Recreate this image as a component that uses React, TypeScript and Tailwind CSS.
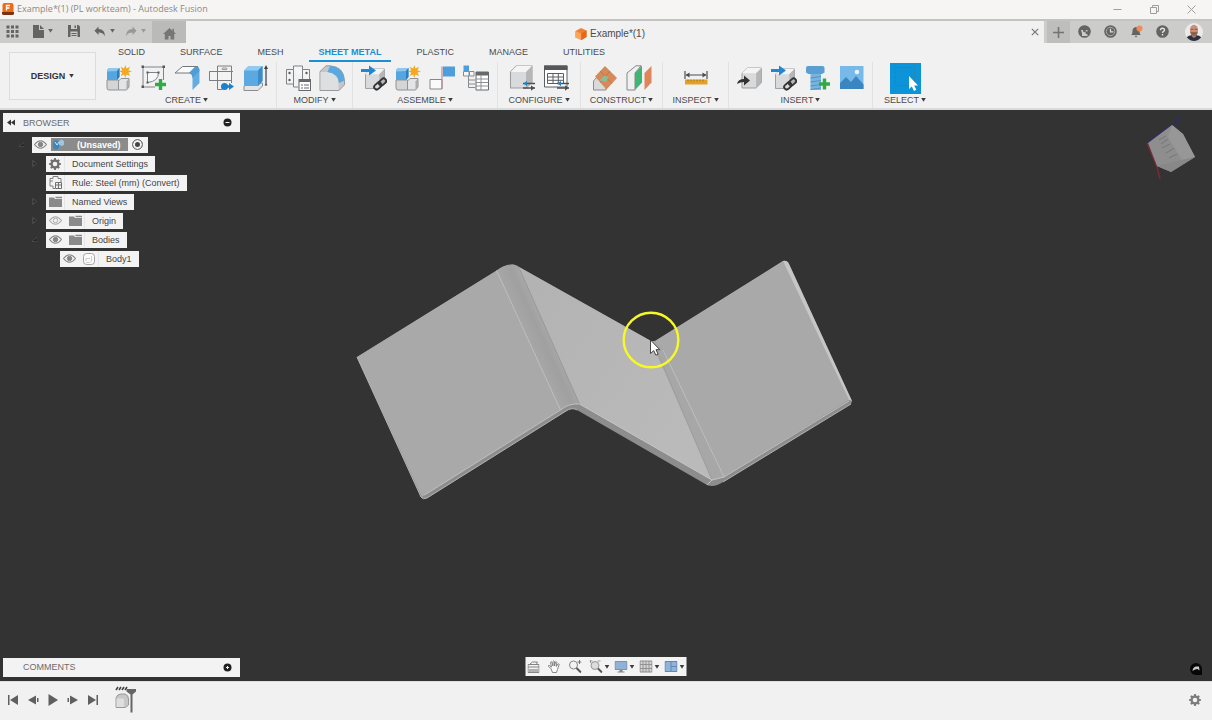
import type { ReactNode } from "react";

const Art = ({ children, className = "size-[26px]", box = "0 0 26 26" }: { children: ReactNode; className?: string; box?: string }) => (
  <svg viewBox={box} className={`shrink-0 ${className}`} fill="none" aria-hidden="true">
    {children}
  </svg>
);

const Tri = ({ className = "text-[#3c3c3c]" }: { className?: string }) => (
  <Art className={`h-1 w-[5px] ${className}`} box="0 0 5 4">
    <path d="M.2 0h4.600L2.500 3.800z" fill="currentColor" />
  </Art>
);

/* ---------- ribbon drawings ---------- */

const Cube = ({ x, y, s }: { x: number; y: number; s: number }) => (
  <g transform={`translate(${x} ${y}) scale(${s / 20})`} strokeLinejoin="round">
    <path d="M0 5.500 5.500 0H20v15l-5.500 5.500H0z" fill="#d9dadb" stroke="#9b9d9f" strokeWidth="1" />
    <path d="M0 5.500 5.500 0H20l-5.500 5.500z" fill="#f4f4f4" />
    <path d="M14.500 5.500 20 0v15l-5.500 5.500z" fill="#b4b6b8" />
  </g>
);

const Plus = ({ x, y }: { x: number; y: number }) => (
  <path d={`M${x - 5.5} ${y}h11M${x} ${y - 5.5}v11`} stroke="#2faa45" strokeWidth="3.400" />
);

const Chain = () => (
  <g stroke="#333" strokeWidth="1.900" fill="none">
    <rect x="17.500" y="14.500" width="8" height="5" rx="2.500" transform="rotate(-42 21.500 17)" />
    <rect x="12.800" y="18.500" width="8" height="5" rx="2.500" transform="rotate(-42 16.800 21)" />
  </g>
);

const Sliders = () => (
  <g stroke="#4b4f52" strokeWidth="1.300">
    <path d="M14 18.500h12M14 23h12" />
    <path d="m18 15.800-3.500 2.700 3.500 2.700z" fill="#1e86cf" stroke="none" />
    <path d="m22 20.300 3.500 2.700-3.500 2.700z" fill="#4b4f52" stroke="none" />
  </g>
);

const NewComponent = () => (
  <Art>
    <path d="M1 15h11.500v10H3q-2 0-2-2z" fill="#d3d5d7" stroke="#919396" />
    <path d="M12.500 16 15 13.500h8V22l-2.500 3h-8z" fill="#e3e4e5" stroke="#919396" strokeLinejoin="round" />
    <path d="M20.500 16.500 23 13.500V22l-2.500 3z" fill="#aaacae" />
    <path d="M1 6.500Q1 3 4.500 3h9v9L11 15H1z" fill="#57a5de" />
    <path d="M1 6.500Q1 3 4.500 3h9L11 6z" fill="#8cc8f0" />
    <path d="M11 6l2.500-3v9L11 15z" fill="#2f7dba" />
    <path d="m19.300 0 1.200 3.600 3.600-1.800-1.700 3.500 3.600 1.100-3.600 1.200 1.700 3.500-3.600-1.700-1.200 3.500-1.200-3.500-3.500 1.700 1.700-3.500-3.500-1.200 3.500-1.100-1.700-3.500 3.500 1.800z" fill="#f4a81d" />
  </Art>
);

const CreateSketch = () => (
  <Art>
    <path d="M3 2h20.500v13M3 2v20h12" stroke="#808386" strokeWidth="1" />
    <path d="M7.500 17.500V7.500h11q0 9-11 10z" stroke="#808386" fill="#f7f7f7" />
    <g fill="#55585b">
      <path d="M1.500.5h2.500v2.500H1.500zM22.500 .5h2.500v2.500h-2.500zM1.500 20.500h2.500v2.500H1.500zM6.500 6.500h2v2h-2zM17.500 6.500h2v2h-2zM6.500 16.500h2v2h-2z" />
    </g>
    <Plus x={20.5} y={19.5} />
  </Art>
);

const Flange = () => (
  <Art>
    <path d="M1 8 8.500 1.500H24L17 8z" fill="#fafafa" stroke="#75787b" />
    <path d="M15 8 21 2q4.500-1 4.500 4v12L18.500 25V13q0-4-3.500-5z" fill="#62ade3" />
    <path d="M18.500 13q0-4-3.500-5l6-6q4.500-1 4.500 4z" fill="#4d9dd7" />
  </Art>
);

const Unfold = () => (
  <Art>
    <path d="M5.500 6.500h4V1h14v5.500H25M5.500 6.500v9H1.500v-9zM9.500 1v23.500h5M23.500 1v17" stroke="#7c7f82" />
    <path d="M1.500 6.500H23.500v9H1.500z" fill="#f3f3f3" stroke="#7c7f82" />
    <path d="M9.500 6.500v9" stroke="#7c7f82" />
    <rect x="14" y="3" width="5" height="1.600" rx=".8" stroke="#7c7f82" strokeWidth=".8" />
    <circle cx="16.500" cy="21.500" r="3.500" fill="#1f80ca" />
    <path d="M16 20.300h5V18l5 3.500-5 3.500v-2.300h-5z" fill="#1f80ca" />
  </Art>
);

const Extrude = () => (
  <Art>
    <path d="m2 21 4-3h14.500v3L16 25.500H2z" fill="#e3e4e5" stroke="#8b8d90" />
    <path d="M2 5.500 6.500 1h14v15L16 21H2z" fill="#5ca9e1" />
    <path d="M2 5.500 6.500 1h14L16 5.500z" fill="#93cbf0" />
    <path d="M16 5.500 20.500 1v15L16 21z" fill="#3b8cca" />
    <path d="M24 3v17M22.800 20h2.400" stroke="#3b3e41" strokeWidth="1.200" />
    <path d="m24 0 2 4h-4z" fill="#3b3e41" />
  </Art>
);

const Rules = () => (
  <Art>
    <path d="M1.500 4.500h7V1h9v3.500h7V14M1.500 4.500V19h7v3h5M8.500 4.500V19M17.500 4.500V14" stroke="#808386" fill="#f5f5f5" />
    <g fill="#5b5e61">
      <circle cx="4.500" cy="8" r="1.200" />
      <circle cx="4.500" cy="15" r="1.200" />
      <circle cx="21.500" cy="8" r="1.200" />
    </g>
    <rect x="14" y="14.500" width="11.500" height="11" fill="#fff" stroke="#66696c" />
    <path d="M14 14.500h11.500V17H14z" fill="#66696c" />
    <path d="M16 20h2m1 0h5m-8 3h2m1 0h5" stroke="#66696c" />
  </Art>
);

const Fillet = () => (
  <Art>
    <path d="M1 6.500 7 .8h4q14 1 14.500 15v4L20 25.500H1z" fill="#c4c6c8" stroke="#97999c" />
    <path d="M1.500 7h7q10.500 1 11 11v7h-18z" fill="#dedfe0" />
    <path d="M11 1q13.500 1 14.500 14.500L20 18Q19 8.500 8.500 7z" fill="#5ba8e0" />
  </Art>
);

const InsertLink = () => (
  <Art>
    <Cube x={4.5} y={4} s={19} />
    <path d="M0 4h8V.5L15 5.500 8 10.500V7H0z" fill="#2386d2" />
    <Chain />
  </Art>
);

const Joint = () => (
  <Art>
    <path d="M1 14.500h12V24H1z" stroke="#85888b" fill="#fafafa" />
    <path d="M13 1.500V24" stroke="#b58e94" strokeWidth="1.200" />
    <path d="M14 1.500h12v10H14z" fill="#4d9fdb" />
  </Art>
);

const Parts = () => (
  <Art>
    <path d="M.5.500h5.500v5.500H.500z" fill="#4d9fdb" />
    <path d="M.5 6.500H6V11H.5zM6.500 6.500H11V11H6.500z" fill="#f7f7f7" stroke="#888b8e" />
    <path d="M5.500 11v11.500M5.500 15H12m-6.500 4H12m-6.500 3.500H12" stroke="#888b8e" />
    <path d="M13 7h12.500v18H13z" fill="#fff" stroke="#66696c" />
    <path d="M13 7h12.500v3.500H13z" fill="#66696c" />
    <path d="M18 10v15M13 14h12.500M13 17.500h12.500M13 21h12.500" stroke="#8d9093" />
  </Art>
);

const ConfigBody = () => (
  <Art>
    <Cube x={1.5} y={1} s={21.5} />
    <Sliders />
  </Art>
);

const ConfigTable = () => (
  <Art>
    <path d="M1.500 1h22.500v21H1.500z" fill="#fff" stroke="#5b5e61" />
    <path d="M1 .5h23.500v4.500H1z" fill="#55585b" />
    <path d="M4.500 8.500h16v10h-16zM4.500 12h16m-16 3.300h16M10 8.500v10m5.300-10v10" stroke="#5b5e61" />
    <Sliders />
  </Art>
);

const PlaneAngle = () => (
  <Art>
    <path d="M1.500 16 5 12l9 9v4H1.500z" fill="#d9dadb" stroke="#8a8d90" />
    <path d="m13 1 12 12-10.500 11.500L3 11.500z" fill="#d58a5a" />
    <path d="m8 6 12 12.500M18 6 8.500 17.500" stroke="#b86e42" strokeWidth=".8" />
    <path d="m7.500 15.500 5-5 4 1.500-2.500 5z" fill="#8ebc96" />
  </Art>
);

const OffsetPlane = () => (
  <Art>
    <path d="M1 8 10 .8h5L9 8v17H1z" fill="#f0f0f0" stroke="#85888b" />
    <path d="m9 8 7-7.500v17L9 25z" fill="#3fb574" />
    <path d="m18.500 8 7-7v16.500l-7 7.500z" fill="#e0855a" />
  </Art>
);

const Measure = () => (
  <Art>
    <path d="M2 6v8M24 6v8M3 10h20" stroke="#4c4f52" strokeWidth="1.200" />
    <path d="m2.500 10 4-2.500v5zM23.500 10l-4-2.500v5z" fill="#4c4f52" />
    <path d="M2 14.500h22.500V19.500H2z" fill="#e2a227" />
    <path d="M5 14.500v2m3-2v2m3-2v2m3-2v2m3-2v2m3-2v2" stroke="#9a6b12" strokeWidth=".8" />
  </Art>
);

const InsertBody = () => (
  <Art>
    <Cube x={5} y={3} s={19.5} />
    <path d="M0 19q1-5 7-5v-3.500l6 5-6 5V17q-4 0-7 2z" fill="#333" />
  </Art>
);

const Bolt = () => (
  <Art>
    <path d="M1 3Q1 1 3 1h14.500q2 0 2 2v4.500L17 9H3.500L1 7.500z" fill="#5a9fd4" />
    <path d="M5.500 9H16v16H5.500z" fill="#79b4e0" />
    <path d="M5.500 13 16 11.500M5.500 17 16 15.500M5.500 21 16 19.500M5.500 24.500 16 23" stroke="#5494c6" />
    <Plus x={19.5} y={19} />
  </Art>
);

const Picture = () => (
  <Art>
    <path d="M1 1h23.500v23H1z" fill="#77b9e8" />
    <path d="m1 18 6-6 5 5 5-6 7.500 8.500V24H1z" fill="#3a86c0" />
    <circle cx="18" cy="7" r="2.300" fill="#e9f4fb" />
  </Art>
);

const SelectArt = () => (
  <Art className="size-[31px]" box="0 0 31 31">
    <path d="M0 0h31v31H0z" fill="#0c93d8" />
    <path d="M5.500 4.500h19v18h-19z" stroke="#3a7f96" strokeDasharray="3 1.500" />
    <path d="M19 13v13l2.800-2.500 2.200 4.500 2.300-1.200L24.200 22.500h3.800z" fill="#fff" />
  </Art>
);

/* ---------- ribbon ---------- */

type Group = { name: string; width: string; tools: [string, () => ReactNode][] };

const GROUPS: Group[] = [
  { name: "CREATE", width: "w-[180px]", tools: [["New component", NewComponent], ["Create sketch", CreateSketch], ["Flange", Flange], ["Unfold", Unfold], ["Extrude", Extrude]] },
  { name: "MODIFY", width: "w-[76px]", tools: [["Rules", Rules], ["Fillet", Fillet]] },
  { name: "ASSEMBLE", width: "w-[145px]", tools: [["Insert component", InsertLink], ["New component", NewComponent], ["Joint", Joint], ["Parts list", Parts]] },
  { name: "CONFIGURE", width: "w-[83px]", tools: [["Configure", ConfigBody], ["Configuration table", ConfigTable]] },
  { name: "CONSTRUCT", width: "w-[82px]", tools: [["Plane at angle", PlaneAngle], ["Offset plane", OffsetPlane]] },
  { name: "INSPECT", width: "w-[66px]", tools: [["Measure", Measure]] },
  { name: "INSERT", width: "w-[144px]", tools: [["Insert mesh", InsertBody], ["Insert derive", InsertLink], ["Insert fastener", Bolt], ["Insert image", Picture]] },
  { name: "SELECT", width: "w-[64px]", tools: [["Select", SelectArt]] },
];

const TABS = ["SOLID", "SURFACE", "MESH", "SHEET METAL", "PLASTIC", "MANAGE", "UTILITIES"];

const Ribbon = () => (
  <section className="flex h-[67px] shrink-0 border-b-2 border-[#d9dadb] bg-[#f1f1f2] text-[#4b4b4b]">
    <button className="mt-[9px] ml-[9px] flex h-12 w-[87px] items-center justify-center gap-1 border border-[#dcdcdd] bg-[#f3f3f4] font-bold text-[#333]">
      DESIGN <Tri />
    </button>
    <div className="flex flex-col">
      <nav className="ml-3 flex h-[19px] gap-[15px]">
        {TABS.map((t) => (
          <button
            key={t}
            className={t === "SHEET METAL" ? "border-b-2 border-[#1b8fd3] px-[10px] font-bold text-[#1b8fd3]" : "border-b-2 border-transparent px-[10px]"}
          >
            {t}
          </button>
        ))}
      </nav>
      <div className="ml-px flex h-[46px]">
        {GROUPS.map((g) => (
          <div key={g.name} className={`flex flex-col items-center border-r border-[#e2e2e3] last:border-r-0 ${g.width}`}>
            <div className="flex h-8 items-center gap-2">
              {g.tools.map(([label, Icon]) => (
                <button key={label} aria-label={label} className="shrink-0">
                  <Icon />
                </button>
              ))}
            </div>
            <button className="flex h-3 items-center gap-[2px] leading-3">
              {g.name} <Tri />
            </button>
          </div>
        ))}
      </div>
    </div>
  </section>
);

/* ---------- top bars ---------- */

const TitleBar = () => (
  <header className="flex h-[19px] shrink-0 items-center bg-[#f7f5f3] pb-px pl-[2px] text-[#8b8986]">
    <Art className="size-3" box="0 0 12 12">
      <rect x=".5" width="11" height="12" rx="2" fill="#ee6a17" />
      <path d="M0 9h12v1.500Q12 12 10 12H2q-2 0-2-1.500z" fill="#7b3210" />
      <path d="M4.500 7.500v-5H8M4.500 5h3" stroke="#fff" strokeWidth="1.300" />
    </Art>
    <h1 className="ml-[3px] flex-1 font-['Open_Sans',sans-serif] text-[9px] leading-4">Example*(1) (PL workteam) - Autodesk Fusion</h1>
    <div className="flex gap-7 pr-4 text-[#a09e9b]">
      <button aria-label="Minimize">
        <Art className="size-[9px]" box="0 0 9 9"><path d="M.5 4.500h8" stroke="currentColor" /></Art>
      </button>
      <button aria-label="Restore">
        <Art className="size-[9px]" box="0 0 9 9"><path d="M.5 2.500h6v6h-6zM2.500 2.500v-2h6v6h-2" stroke="currentColor" /></Art>
      </button>
      <button aria-label="Close window">
        <Art className="size-[9px]" box="0 0 9 9"><path d="m.5.500 8 8m0-8-8 8" stroke="currentColor" /></Art>
      </button>
    </div>
  </header>
);

const TabBar = () => (
  <div className="flex h-6 shrink-0 border-t-2 border-[#c3c4c2] bg-[#cccdcb] text-[#636463]">
    <div className="flex w-[152px] items-center pb-[2px] pl-[6px]">
      <button aria-label="Data panel">
        <Art className="size-[13px]" box="0 0 13 13">
          <path d="M.5.5h3v3h-3zM5 .5h3v3H5zM9.500.5h3v3h-3zM.5 5h3v3h-3zM5 5h3v3H5zM9.500 5h3v3h-3zM.5 9.500h3v3h-3zM5 9.500h3v3H5zM9.500 9.500h3v3h-3z" fill="currentColor" />
        </Art>
      </button>
      <button aria-label="File" className="ml-[13px] flex items-center gap-1">
        <Art className="h-[13px] w-[12px]" box="0 0 12 13"><path d="M1 0h6v5h5v8H1z" fill="currentColor" /><path d="m8 0 4 4H8z" fill="currentColor" /></Art>
        <Tri className="text-[#636463]" />
      </button>
      <button aria-label="Save" className="ml-[15px]">
        <Art className="size-3" box="0 0 12 12">
          <path d="M0 0h10.500L12 1.500V12H0z" fill="currentColor" />
          <path d="M3 0h6v4H3zM2.500 6.500h7V12h-7z" fill="#cccdcb" />
          <path d="M6.500.5H8v2.500H6.500zM3.500 8h5v1h-5zM3.500 10h5v1h-5z" fill="currentColor" />
        </Art>
      </button>
      <button aria-label="Undo" className="ml-[14px] flex items-center gap-1">
        <Art className="h-[11px] w-[12px]" box="0 0 12 11"><path d="M4.500.500v2.500q6.500 0 6.500 7.500-1.500-4-6.500-4V9L.5 4.800z" fill="currentColor" /></Art>
        <Tri className="text-[#636463]" />
      </button>
      <button aria-label="Redo" className="ml-[10px] flex items-center gap-1 text-[#979897]">
        <Art className="h-[11px] w-[12px]" box="0 0 12 11"><path d="M7.500.500v2.500Q1 3 1 10.500q1.500-4 6.500-4V9l4-4.200z" fill="currentColor" /></Art>
        <Tri className="text-[#979897]" />
      </button>
    </div>
    <button aria-label="Home" className="flex w-[34px] items-center justify-center bg-[#babbb9] pt-[3px]">
      <Art className="size-[13px]" box="0 0 13 13">
        <path d="M6.500 1 0 7h1.800v5.500h3.700V9h2v3.500h3.700V7H13l-2-1.900V1.800H9.500v1.900z" fill="#757675" />
      </Art>
    </button>
    <div className="flex flex-1 items-center bg-[#f1f1f2] px-1 text-[10px] text-[#4b4b4b]">
      <div className="flex flex-1 items-center justify-center gap-[3px] pt-[3px]">
        <Art className="size-3" box="0 0 12 12">
          <path d="m6 0 5.500 2.500v6.500L6.500 12 .5 9.500V3z" fill="#f08030" />
          <path d="M.5 3 6 5.500V12L.5 9.500z" fill="#f9a55c" />
          <path d="m6 5.500 5.500-3v6.500L6.500 12z" fill="#e2691c" />
        </Art>
        Example*(1)
      </div>
      <button aria-label="Close tab" className="px-px">
        <Art className="size-2" box="0 0 8 8"><path d="m.8.800 6.400 6.400m0-6.400L.8 7.200" stroke="#777" strokeWidth="1.200" /></Art>
      </button>
    </div>
    <div className="flex w-[168px] items-center">
      <button aria-label="New tab" className="ml-[3px] flex h-full w-[23px] items-center justify-center bg-[#bebfbd]">
        <Art className="size-[11px]" box="0 0 11 11"><path d="M5.500 0v11M0 5.500h11" stroke="#737473" strokeWidth="1.600" /></Art>
      </button>
      <div className="ml-2 flex items-center gap-[13px] pb-[2px]">
        <button aria-label="Extensions">
          <Art className="size-[13px]" box="0 0 13 13">
            <circle cx="6.500" cy="6.500" r="6.300" fill="currentColor" />
            <path d="M3 5h2.200a1.500 1.500 0 1 0 2.600 0H9.500V6.500a1.400 1.400 0 1 0 0 2.500V11H4V8.500z" fill="#cccdcb" />
          </Art>
        </button>
        <button aria-label="Job status">
          <Art className="size-[13px]" box="0 0 13 13">
            <circle cx="6.500" cy="6.500" r="6.300" fill="currentColor" />
            <circle cx="6.500" cy="6.500" r="4.200" stroke="#a9aaa9" strokeWidth="1" />
            <path d="M6.500 3.800v3h2.800" stroke="#e2e3e1" strokeWidth="1.200" />
          </Art>
        </button>
        <button aria-label="Notifications">
          <Art className="size-[13px]" box="0 0 13 13">
            <path d="M1 10q1.500-1 1.500-4Q2.500 2.500 6 2q3.500.5 3.500 4 0 3 1.500 4zM4.500 10.800h3L6 12.500z" fill="currentColor" />
            <circle cx="9.500" cy="3.500" r="3" fill="#ee8b57" />
          </Art>
        </button>
        <button aria-label="Help">
          <Art className="size-[13px]" box="0 0 13 13">
            <circle cx="6.500" cy="6.500" r="6.300" fill="currentColor" />
            <path d="M4.500 5.200q0-2 2-2t2 1.800q0 1-1.200 1.600-.8.400-.8 1.400M6.500 9v1.500" stroke="#e2e3e1" strokeWidth="1.400" />
          </Art>
        </button>
      </div>
      <button aria-label="Account" className="ml-[16px] pb-px">
        <Art className="size-[18px]" box="0 0 18 18">
          <circle cx="9" cy="9" r="9" fill="#eceae8" />
          <path d="M1.800 14.300Q4 11.500 9 12.500q5-1 7.200 1.800A9 9 0 0 1 1.800 14.300z" fill="#2b3240" />
          <path d="M7 11h4v2.500L9 15l-2-1.500z" fill="#b87f69" />
          <ellipse cx="9" cy="7" rx="4" ry="5.300" fill="#c98f77" />
          <path d="M5.100 8.500Q9 10 12.900 8.500 12.500 13 9 13.200 5.500 13 5.100 8.500z" fill="#8d6757" />
          <path d="M5.500 6.300h2.800M9.700 6.300h2.800M7.500 10.300h3" stroke="#6b4b42" strokeWidth=".8" />
        </Art>
      </button>
    </div>
  </div>
);

/* ---------- browser tree ---------- */

const Eye = ({ off = false }: { off?: boolean }) => (
  <Art className="h-[9px] w-[13px]" box="0 0 13 9">
    <path d="M.5 4.500q6-7.500 12 0-6 7.500-12 0z" stroke={off ? "#aaaaaa" : "#858585"} strokeWidth="1.100" />
    <circle cx="6.500" cy="4.500" r="2.200" fill={off ? "none" : "#858585"} stroke={off ? "#aaaaaa" : "#858585"} />
  </Art>
);

const Folder = () => (
  <Art className="h-[11px] w-[13px]" box="0 0 13 11">
    <path d="M0 1.500h5l1 1.500h7v8H0z" fill="#8a8a8a" />
    <path d="M6 .8h7v1.500H7z" fill="#8a8a8a" />
  </Art>
);

const GEAR = "M5.600 0h1.800l.3 1.700 1.300.5L10.400 1.300l1.300 1.300-.9 1.400.5 1.300 1.700.3v1.800l-1.700.3-.5 1.300.9 1.400-1.300 1.300L9 10.900l-1.300.5L7.400 13H5.600l-.3-1.600L4 10.900l-1.400.8-1.300-1.300.9-1.400-.5-1.300L0 7.400V5.600l1.700-.3L2.200 4l-.9-1.400 1.300-1.300 1.400.9 1.300-.5zM6.500 4a2.500 2.500 0 1 0 0 5 2.500 2.500 0 0 0 0-5z";

const Gear = ({ color }: { color: string }) => (
  <Art className="size-3" box="0 0 13 13"><path d={GEAR} fill={color} fillRule="evenodd" /></Art>
);

const RuleIcon = () => (
  <Art className="size-[13px]" box="0 0 13 13">
    <path d="M1 2.500h3V.5h5v2h3V6M1 2.500V10h3v2.500h2M4 5H1" stroke="#808080" />
    <path d="M6.500 6.500h6v6h-6zM6.500 9h6m-3-2.500v6" stroke="#707070" />
  </Art>
);

const BodyIcon = () => (
  <Art className="size-3" box="0 0 12 12">
    <rect x=".5" y=".5" width="11" height="11" rx="3" fill="#fafafa" stroke="#a5a5a5" />
    <path d="M3 8V5.500h4M8.500 3v5L6.500 9.500H3" stroke="#cfcfcf" />
  </Art>
);

const Expander = ({ open = false, show = true }: { open?: boolean; show?: boolean }) =>
  show ? (
    <button aria-label={open ? "Collapse" : "Expand"} className="flex w-[5px] justify-center">
      <Art className="h-[7px] w-[5px]" box="0 0 5 7">
        {open ? <path d="M5 1.500v4H0z" fill="#1d1d1d" stroke="#5a5a5a" strokeWidth=".6" /> : <path d="M1 .5v6L4 3.500z" fill="#1d1d1d" stroke="#666" strokeWidth=".8" />}
      </Art>
    </button>
  ) : (
    <span className="w-[5px]" />
  );

type Row = { label: string; pad: string; icon: ReactNode; eye?: "on" | "off"; exp?: boolean; open?: boolean };

const ROWS: Row[] = [
  { label: "Document Settings", pad: "pl-[29px]", icon: <Gear color="#707070" />, exp: true },
  { label: "Rule: Steel (mm) (Convert)", pad: "pl-[29px]", icon: <RuleIcon /> },
  { label: "Named Views", pad: "pl-[29px]", icon: <Folder />, exp: true },
  { label: "Origin", pad: "pl-[29px]", icon: <Folder />, eye: "off", exp: true },
  { label: "Bodies", pad: "pl-[29px]", icon: <Folder />, eye: "on", exp: true, open: true },
  { label: "Body1", pad: "pl-[43px]", icon: <BodyIcon />, eye: "on" },
];

const BrowserPanel = () => (
  <aside className="relative w-[237px] text-[#444]">
    <header className="flex h-[19px] items-center bg-[#f3f3f4] pr-2 pl-1 text-[#6b6b6b]">
      <button aria-label="Collapse browser">
        <Art className="h-[7px] w-2" box="0 0 8 7"><path d="M4 .5v6L0 3.500zM8 .5v6L4 3.500z" fill="#333" /></Art>
      </button>
      <h2 className="ml-2 flex-1">BROWSER</h2>
      <button aria-label="Panel options">
        <Art className="size-[9px]" box="0 0 9 9"><circle cx="4.500" cy="4.500" r="4" fill="#222" /><path d="M2.500 4.500h4" stroke="#f3f3f4" /></Art>
      </button>
    </header>
    <ul className="mt-[3px]">
      <li className="flex h-[19px] items-center gap-2 pl-4">
        <Expander open />
        <div className="flex h-4 items-center bg-[#f3f3f4] pr-[5px] pl-[2px]">
          <button aria-label="Hide design"><Eye /></button>
          <div className="mx-1 flex h-[13px] items-center gap-[13px] bg-[#8b8b8b] pr-[7px] pl-[2px] font-bold text-white">
            <Art className="size-[11px]" box="0 0 11 11">
              <path d="m0 3 3-2.500 3 2.500v6L3 11 0 9z" fill="#3f86bd" />
              <path d="m6 2 2.500-1.500L11 2v4L8.500 7 6 5.500z" fill="#9cc6e4" />
              <path d="m2 3 2 3 2-3" stroke="#cfe6f6" />
            </Art>
            (Unsaved)
          </div>
          <input type="radio" name="active" defaultChecked aria-label="Active component" className="size-[11px] appearance-none rounded-full border border-[#777] bg-[#444] shadow-[inset_0_0_0_2px_#f3f3f4]" />
        </div>
      </li>
      {ROWS.map((r) => (
        <li key={r.label} className={`flex h-[19px] items-center gap-[9px] ${r.pad}`}>
          <Expander show={!!r.exp} open={r.open} />
          <div className="flex h-4 items-center bg-[#f3f3f4] pr-[7px]">
            {r.eye && (
              <button aria-label={`Toggle ${r.label}`} className="flex w-5 justify-center pr-[2px]">
                <Eye off={r.eye === "off"} />
              </button>
            )}
            <span className="flex w-[18px] justify-center">{r.icon}</span>
            <span className="flex h-full items-center border-l border-[#e6e6e6] pl-[7px] whitespace-nowrap">{r.label}</span>
          </div>
        </li>
      ))}
    </ul>
  </aside>
);

/* ---------- canvas ---------- */

const Model = () => (
  <svg viewBox="0 110 1212 571" preserveAspectRatio="xMidYMid meet" className="absolute inset-0 size-full" fill="none" role="img" aria-label="Bent sheet metal body">
    <defs>
      <linearGradient id="bend" x1="528" y1="345" x2="552" y2="334" gradientUnits="userSpaceOnUse">
        <stop stopColor="#a8a8a8" />
        <stop offset=".6" stopColor="#a0a0a0" />
        <stop offset="1" stopColor="#aaaaaa" />
      </linearGradient>
      <linearGradient id="mid" x1="520" y1="300" x2="700" y2="420" gradientUnits="userSpaceOnUse">
        <stop stopColor="#b3b3b3" />
        <stop offset="1" stopColor="#bababa" />
      </linearGradient>
    </defs>
    <path d="M357 357 498 270Q506 264 513 264.500 518 265 521 268L651 341H655L783 261Q787 260 789 264L852 401 851 404 723 482Q714 488 707 485L577 410Q572 407 566 411L427 498Q423 500 421 497z" fill="#8d8d8d" />
    <path d="M357 357 496.500 270.500 560.500 410 424.500 495 422 497z" fill="#a9a9a9" />
    <path d="M496.500 270.500Q506 264 513 264.500 518 265 520 270L579.500 404Q570 403 560.500 410z" fill="url(#bend)" />
    <path d="M519 267 651 341 655 347 712 480 579.500 404 520 270z" fill="url(#mid)" />
    <path d="M651 341H655L663 350 724 477 712 480z" fill="#a7a7a7" />
    <path d="M655 341 783 261 787 262 849 400 724 477 663 350z" fill="#aaa9aa" />
    <path d="M783 261Q787 260 789 264L852 401 849 400z" fill="#c6c6c6" />
    <path d="M496.500 270.500 560.500 410M579.500 404Q569 403 560.500 410L424.500 495M663 350 724 477 849 401" stroke="#bfbfbf" strokeWidth="1" />
    <path d="M520 270 579.500 404" stroke="#9a9a9a" strokeWidth="1" />
    <path d="M655 347 712 480" stroke="#9e9e9e" strokeWidth="1" />
    <path d="M579.500 404 712 480 724 477M712 480 707 485" stroke="#c6c6c6" strokeWidth="1" />
    <path d="M357 357 421 497Q423 500 427 498L566 411Q572 407 577 410" stroke="#b5b5b5" strokeWidth="1" />
    <path d="M723 482 851 404" stroke="#b0b0b0" strokeWidth="1" />
    <circle cx="651" cy="340" r="27.300" stroke="#f6f925" strokeWidth="2.400" />
    <path d="M650.500 340v13.500l3.200-2.900 2.200 4.600 2.200-1-2.100-4.500h3.800z" fill="#fff" stroke="#333" strokeWidth=".9" />
  </svg>
);

const ViewCube = () => (
  <svg viewBox="0 0 60 66" className="absolute top-[5px] right-2 h-[66px] w-[60px]" fill="none" role="img" aria-label="View cube">
    <path d="M3.500 27.500 35 5M32 9l4-8" stroke="#2d2b66" strokeWidth="1.500" />
    <path d="M3 28 13 52l3 12" stroke="#7b2a35" strokeWidth="1.500" />
    <path d="M4 28 28 10 39 19 51 42 27 57 13 51z" fill="#8e8e8e" />
    <path d="M28 10 39 19 51 42 38 45 24 22z" fill="#979797" />
    <path d="m13 51 25-6 13-3-24 15z" fill="#888888" />
    <path d="m15 25 7-4m-5 8 7-5m-6 9 8-4m-4 9 8-5m-5 10 8-4" stroke="#7c7c7c" strokeWidth="1.300" />
  </svg>
);

const NavBar = () => (
  <div className="absolute bottom-[5px] left-1/2 flex h-[19px] -translate-x-1/2 items-center gap-2 bg-[#f3f3f4] px-[2px] text-[#606060]">
    <button aria-label="Orbit">
      <Art className="h-3 w-[12px]" box="0 0 12 12"><path d="M2.500 3 5 1h5l-1 2M.5 3.500h11v8H.5zM.5 6h11M3 8.500h6" stroke="#858585" /><path d="M1 8h10v3H1z" fill="#b0b0b0" /></Art>
    </button>
    <button aria-label="Pan">
      <Art className="size-[13px]" box="0 0 13 13">
        <path d="M3.500 8.500 1 6.500q-.5-1.500 1-1L4 7 3 2.500q.3-1.300 1.300-.5L5.500 6V1.500Q6 .3 7 1.500V6l1-4Q8.700 1 9.300 2.200L8.800 6.500 10.500 4q1-.6 1.200.5L10 9.500 9 12.500H5z" stroke="#7c7c7c" fill="#fafafa" strokeWidth=".9" />
      </Art>
    </button>
    <button aria-label="Zoom">
      <Art className="size-[13px]" box="0 0 13 13"><circle cx="5" cy="5" r="4" stroke="#858585" /><path d="m8 8 4.500 4.500" stroke="#555" strokeWidth="2" /><path d="M11 0v4M9 2h4" stroke="#777" /></Art>
    </button>
    <button aria-label="Fit" className="flex items-center gap-[2px]">
      <Art className="size-[13px]" box="0 0 13 13"><circle cx="5.500" cy="5.500" r="4" stroke="#959595" fill="#dcdcdc" /><path d="m8.500 8.500 4 4" stroke="#555" strokeWidth="2" /><path d="M0 1h3M1 0v3m7-2h3" stroke="#999" /></Art>
      <Tri />
    </button>
    <button aria-label="Display settings" className="-ml-[3px] flex items-center gap-[2px]">
      <Art className="size-[13px]" box="0 0 13 13"><path d="M.5 1.500h12v8H.5z" fill="#8fb2d6" stroke="#8193a6" /><path d="M5 10h3v1.500h2v1H3v-1h2z" fill="#858585" /></Art>
      <Tri />
    </button>
    <button aria-label="Grid and snaps" className="-ml-[3px] flex items-center gap-[2px]">
      <Art className="size-[13px]" box="0 0 13 13"><path d="M.5 1h12v11H.5z" fill="#d5d5d5" stroke="#8c8c8c" /><path d="M3.500 1v11m3-11v11m3-11v11M.5 4.500h12m-12 4h12" stroke="#8c8c8c" strokeWidth=".9" /></Art>
      <Tri />
    </button>
    <button aria-label="Viewports" className="-ml-[3px] flex items-center gap-[2px]">
      <Art className="size-[13px]" box="0 0 13 13"><path d="M.5 1.500h12v10H.5z" fill="#90b3da" stroke="#6388b0" /><path d="M6.500 1.500v10M6.500 6.500h6" stroke="#6388b0" /></Art>
      <Tri />
    </button>
  </div>
);

const Canvas = () => (
  <main className="relative flex flex-1 flex-col justify-between overflow-hidden bg-[#333334] pt-[3px] pr-3 pb-1 pl-[3px]">
    <Model />
    <ViewCube />
    <BrowserPanel />
    <div className="relative flex w-[237px] items-center bg-[#f3f3f4] pr-2 pl-5 text-[#6b6b6b]">
      <h2 className="flex-1 leading-[19px]">COMMENTS</h2>
      <button aria-label="Open comments">
        <Art className="size-[9px]" box="0 0 9 9"><circle cx="4.500" cy="4.500" r="4" fill="#222" /><path d="M3 4.500h3m-1.500-1.500v3" stroke="#f3f3f4" /></Art>
      </button>
    </div>
    <NavBar />
    <button aria-label="Assistant" className="absolute right-[10px] bottom-[6px]">
      <Art className="size-3" box="0 0 12 12">
        <path d="M6 0a6 6 0 0 1 6 6v6H6A6 6 0 0 1 6 0z" fill="#070707" />
        <path d="M2.500 8Q3 3.500 6.500 3.500H9l.5 4-2-1.500Q5 6 2.500 8z" fill="#c9c9c9" />
      </Art>
    </button>
  </main>
);

/* ---------- timeline ---------- */

const PLAYBACK: [string, string][] = [
  ["Go to start", "M1 1h1.500v10H1zM11 1v10L3 6z"],
  ["Step back", "M9 1.500v9L1 6zM10 4h1.500v4H10z"],
  ["Play", "M1.500 0v12L11 6z"],
  ["Step forward", "M3 1.500v9L11 6zM.5 4H2v4H.5z"],
  ["Go to end", "M9.500 1H11v10H9.500zM1 1v10l8-5z"],
];

const Timeline = () => (
  <footer className="flex h-[39px] shrink-0 items-center border-t border-[#dedede] bg-[#f1f1f1] px-[7px] pb-[2px]">
    <div className="flex gap-2">
      {PLAYBACK.map(([label, d]) => (
        <button key={label} aria-label={label}>
          <Art className="size-3" box="0 0 12 12"><path d={d} fill="#5f5f5f" /></Art>
        </button>
      ))}
    </div>
    <button aria-label="Convert to sheet metal" className="ml-4">
      <Art className="h-7 w-[22px]" box="0 0 22 28">
        <path d="m1 4 2-3m1 3 2-3m1 3 2-3m1 3 2-3" stroke="#444" strokeWidth="1.600" />
        <path d="M1 12q1-4 5-4h4q3.500 1 3.500 5v6l-3 2.500H1z" fill="#c6c7c8" stroke="#999" />
        <path d="M1.500 12.500H9V21H1.500z" fill="#dededf" />
        <path d="M11.500 3h9.500v2.500L17.500 8.500v18h-2v-18L11.500 5.500z" fill="#666" />
      </Art>
    </button>
    <button aria-label="Timeline settings" className="mr-1 ml-auto">
      <Gear color="#7c7c7c" />
    </button>
  </footer>
);

export default function App() {
  return (
    <div className="flex h-screen flex-col overflow-hidden font-['Liberation_Sans',Arial,sans-serif] text-[9px] leading-3">
      <TitleBar />
      <TabBar />
      <Ribbon />
      <Canvas />
      <Timeline />
    </div>
  );
}
